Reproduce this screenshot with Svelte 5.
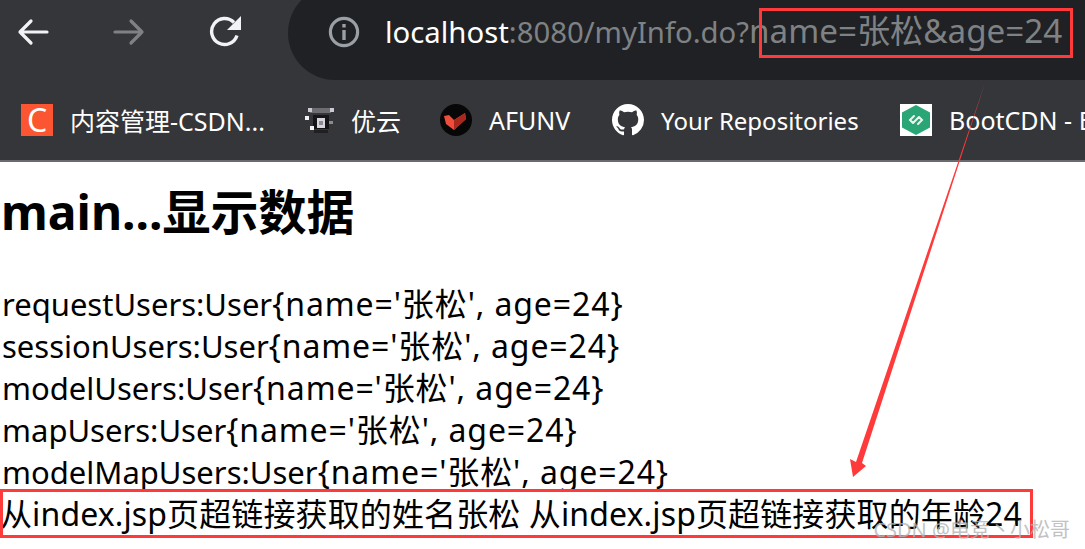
<script>
  const users = [
    ['requestUsers', 24],
    ['sessionUsers', 24],
    ['modelUsers', 24],
    ['mapUsers', 24],
    ['modelMapUsers', 24]
  ];
</script>

<div class="page">
  <header class="chrome">
    <div class="toolbar">
      <nav class="nav">
        <svg class="nav-icon" viewBox="0 0 32 32"><path d="M30 16H3M14 5 3 16l11 11" fill="none" stroke="#f1f3f4" stroke-width="3.2" stroke-linecap="round" stroke-linejoin="round"/></svg>
        <svg class="nav-icon" viewBox="0 0 32 32"><path d="M2 16h27M18 5l11 11-11 11" fill="none" stroke="#808184" stroke-width="3.2" stroke-linecap="round" stroke-linejoin="round"/></svg>
        <svg class="nav-icon" viewBox="0 0 32 32"><path d="M28 19.500A13 13 0 1 1 25 6.500" fill="none" stroke="#f1f3f4" stroke-width="3.400"/><path d="M32 0v14H18z" fill="#f1f3f4"/></svg>
      </nav>
      <div class="omnibox">
        <svg class="info" viewBox="0 0 32 32"><circle cx="16" cy="16" r="13.6" fill="none" stroke="#9aa0a6" stroke-width="3.2"/><path d="M14.3 14h3.4v10h-3.4zM14.3 8h3.4v3.4h-3.4z" fill="#9aa0a6"/></svg>
        <span class="url"><span class="host">localhost</span>:8080/myInfo.do?<span class="query">name=张松&amp;age=24</span></span>
      </div>
    </div>
    <div class="bookmarks">
      <div class="bm bm-csdn">
        <span class="fav csdn">C</span><span>内容管理-CSDN...</span>
      </div>
      <div class="bm bm-yun">
        <svg class="fav" viewBox="0 0 32 32" shape-rendering="crispEdges">
          <path d="M6 4h21v5H6z" fill="#6d6d72"/>
          <path d="M4 4h4v4H4zM26 4h4v4h-4z" fill="#cfc6d6"/>
          <path d="M9 11h16v4H9z" fill="#17171a"/>
          <path d="M9 15h16v10H9z" fill="#141416"/>
          <path d="M1 12h4v4H1zM6 22h4v4H6z" fill="#f2f2f2"/>
          <path d="M13 14h8v10h-8z" fill="#d8d4dc"/>
          <path d="M15 17h4v4h-4z" fill="#8e8a94"/>
          <path d="M25 17h4v3h-4z" fill="#8b8b90"/>
          <path d="M10 26h14v3H10z" fill="#202023"/>
        </svg>
        <span>优云</span>
      </div>
      <div class="bm bm-afu">
        <svg class="fav" viewBox="0 0 32 32"><circle cx="16" cy="16" r="16" fill="#070707"/><path d="M4 12l5-1 5 5 11-7 1 6-12 11-8-6z" fill="#ee4d3c"/><path d="M14 16l11-7 1 6-12 11z" fill="#a8281d"/></svg>
        <span>AFUNV</span>
      </div>
      <div class="bm bm-git">
        <svg class="fav" viewBox="0 0 16 16"><path fill="#fff" d="M8 0C3.58 0 0 3.58 0 8c0 3.54 2.29 6.53 5.47 7.59.4.07.55-.17.55-.38 0-.19-.01-.82-.01-1.49-2.01.37-2.53-.49-2.69-.94-.09-.23-.48-.94-.82-1.13-.28-.15-.68-.52-.01-.53.63-.01 1.08.58 1.23.82.72 1.21 1.87.87 2.33.66.07-.52.28-.87.51-1.07-1.78-.2-3.64-.89-3.64-3.95 0-.87.31-1.59.82-2.15-.08-.2-.36-1.02.08-2.12 0 0 .67-.21 2.2.82.64-.18 1.32-.27 2-.27s1.36.09 2 .27c1.53-1.04 2.2-.82 2.2-.82.44 1.1.16 1.92.08 2.12.51.56.82 1.27.82 2.15 0 3.07-1.87 3.75-3.65 3.95.29.25.54.73.54 1.48 0 1.07-.01 1.93-.01 2.2 0 .21.15.46.55.38A8.01 8.01 0 0 0 16 8c0-4.42-3.58-8-8-8z"/></svg>
        <span>Your Repositories</span>
      </div>
      <div class="bm bm-boot">
        <svg class="fav" viewBox="0 0 32 32"><rect width="32" height="32" fill="#fff"/><path d="M16 1 30 8.500v15L16 31 2 23.500v-15z" fill="#2aa575"/><path d="M14 12l-4 4 3 3M18 20l4-4-3-3M13 19l6-6" fill="none" stroke="#e8f5ef" stroke-width="2" stroke-linecap="round"/></svg>
        <span>BootCDN - B</span>
      </div>
    </div>
  </header>

  <main class="content">
    <h1>main...显示数据</h1>
    <div class="rows">
      {#each users as [label, age]}
        <div class="user"><span class="label">{label}:User</span>&#123;name='张松', age={age}&#125;</div>
      {/each}
      <div class="links">从index.jsp页超链接获取的姓名张松 从index.jsp页超链接获取的年龄24</div>
    </div>
  </main>

  <!-- annotations drawn on top of the screenshot -->
  <div class="mark mark-url"></div>
  <div class="mark mark-row"></div>
  <svg class="arrow" viewBox="0 0 1085 549">
    <path d="M985 83 862 463 866 466 853 477 850 459 856 462Z" fill="#ff3a3a"/>
  </svg>
  <span class="watermark">CSDN @电竞丶小松哥</span>
</div>

<style>
  :global(body) {
    margin: 0;
    background: #fff;
  }
  .page {
    position: relative;
    width: 1085px;
    height: 549px;
    overflow: hidden;
    font-family: "Noto Sans", "Noto Sans CJK SC", sans-serif;
    color: #000;
  }
  .chrome {
    background: #35363a;
    border-bottom: 2px solid #6a6b6e;
  }
  .toolbar {
    display: flex;
    height: 80px;
  }
  .nav {
    display: flex;
    align-items: center;
    gap: 64px;
    width: 288px;
    padding: 0 0 16px 17px;
    box-sizing: border-box;
  }
  .nav-icon {
    width: 32px;
    height: 32px;
    flex: none;
  }
  /* the top of the pill is cropped by the screenshot */
  .omnibox {
    flex: 1;
    display: flex;
    align-items: center;
    height: 94px;
    margin-top: -14px;
    background: #202124;
    border-radius: 47px 0 0 47px;
    padding: 0 0 2px 40px;
    box-sizing: border-box;
    font-size: 29.3px;
    color: #7f8285;
    white-space: nowrap;
  }
  .info {
    width: 32px;
    height: 32px;
    margin-right: 25px;
  }
  .url {
    margin-bottom: 7px;
  }
  .host {
    color: #fff;
  }
  .query {
    font-size: 33.2px;
  }
  .bookmarks {
    display: flex;
    align-items: center;
    height: 80px;
    font-size: 25px;
    color: #fff;
    white-space: nowrap;
    padding-left: 21px;
  }
  .bm {
    display: flex;
    align-items: center;
    gap: 17px;
    flex: none;
  }
  .bm-csdn { width: 283px; }
  .bm-yun { width: 136px; gap: 15px; }
  .bm-afu { width: 172px; }
  .bm-git { width: 288px; font-size: 24px; }
  .fav {
    width: 32px;
    height: 32px;
    flex: none;
  }
  .csdn {
    display: flex;
    align-items: center;
    justify-content: center;
    background: #fc5531;
    font-size: 32px;
    line-height: 1;
  }
  .content {
    padding: 0 3px;
  }
  h1 {
    margin: 0 0 0 -2px;
    padding: 24px 0 45px;
    font-size: 48px;
    line-height: 52px;
    font-weight: 700;
  }
  .rows {
    font-size: 32px;
    line-height: 42px;
    white-space: nowrap;
  }
  .user {
    letter-spacing: 0.9px;
    margin-left: -1px;
  }
  .label {
    font-size: 31px;
    letter-spacing: 0;
  }
  .links {
    margin-left: -3px;
    letter-spacing: 0.12px;
  }
  .mark {
    position: absolute;
    border: 3px solid #ff3a3a;
    box-sizing: border-box;
  }
  .mark-url {
    left: 759px;
    top: 8px;
    width: 314px;
    height: 50px;
  }
  .mark-row {
    left: 0;
    top: 489px;
    width: 1033px;
    height: 49px;
  }
  .arrow {
    position: absolute;
    inset: 0;
    width: 1085px;
    height: 549px;
  }
  .watermark {
    position: absolute;
    right: 15px;
    top: 514px;
    font-size: 20px;
    color: #b4b4b4;
    opacity: 0.8;
  }
</style>
